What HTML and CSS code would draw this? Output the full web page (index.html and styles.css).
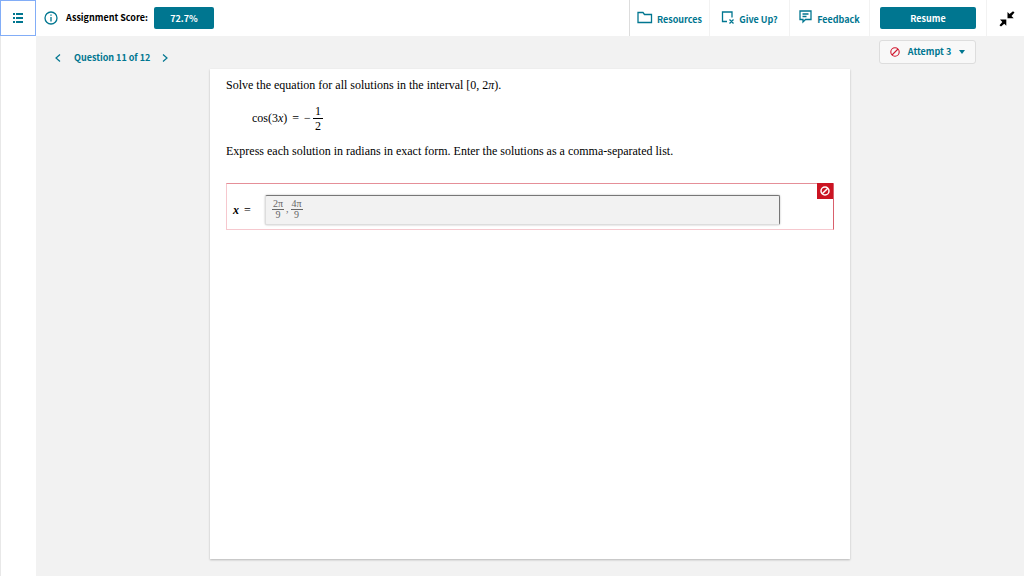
FILE: index.html
```html
<!DOCTYPE html>
<html lang="en">
<head>
    <meta charset="UTF-8">
    <title>Question 11 of 12</title>
    <link rel="stylesheet" href="styles.css">
</head>
<body>
<div class="app">
    <aside class="sidebar">
        <button class="menu" type="button" aria-label="Question list">
            <svg width="12" height="10" viewBox="0 0 12 10" fill="#007690">
                <path d="M1 0h2v2H1zM4 0h7v2H4zM1 4h2v2H1zM4 4h7v2H4zM1 8h2v2H1zM4 8h7v2H4z"/>
            </svg>
        </button>
    </aside>

    <div class="content">
        <header class="header">
            <button class="info" type="button" aria-label="Score information">
                <svg width="14" height="14" viewBox="0 0 14 14" fill="none" stroke="#007690">
                    <circle cx="7" cy="7" r="6" stroke-width="1.3"/>
                    <path d="M7 6v4.5M7 3.5v1.3" stroke-width="1.3"/>
                </svg>
            </button>
            <span class="score-label">Assignment Score:</span>
            <span class="score">72.7%</span>

            <nav class="tools">
                <a class="tool" href="#">
                    <svg width="16" height="14" viewBox="0 0 16 14" fill="none" stroke="#007690" stroke-width="1.3">
                        <path d="M1 11.500v-10h5l1.500 2h7v8z"/>
                    </svg>
                    <span>Resources</span>
                </a>
                <a class="tool" href="#">
                    <svg width="14" height="14" viewBox="0 0 14 14" fill="none" stroke="#007690" stroke-width="1.3">
                        <path d="M6 10.500H1.500V1h9.500v5.500M8.500 8.500l4 4M12.500 8.500l-4 4"/>
                    </svg>
                    <span>Give Up?</span>
                </a>
                <a class="tool" href="#">
                    <svg width="14" height="16" viewBox="0 0 14 16" fill="none" stroke="#007690" stroke-width="1.3">
                        <path d="M1 1h11v8.500H6.500L4 12V9.500H1zM3.500 4h6M3.500 6.500h4"/>
                    </svg>
                    <span>Feedback</span>
                </a>
            </nav>
            <div class="resume-box">
                <button class="resume" type="button">Resume</button>
            </div>
            <button class="collapse" type="button" aria-label="Exit full screen">
                <svg width="16" height="16" viewBox="0 0 16 16" fill="#000">
                    <path d="M8.500 7.300V1l2 2L14 0.300 15.500 1.500 12.500 5l2.200 2.300zM7.300 8.500v6.300l-2-2L2 15.500 0.500 14.300 3.300 11 1 8.500z"/>
                </svg>
            </button>
        </header>

        <div class="bar">
            <button class="arrow" type="button" aria-label="Previous question">
                <svg width="6" height="8" viewBox="0 0 6 8" fill="none" stroke="#007690" stroke-width="1.2"><path d="M5 0.500L1 4l4 3.500"/></svg>
            </button>
            <span class="position">Question 11 of 12</span>
            <button class="arrow" type="button" aria-label="Next question">
                <svg width="6" height="8" viewBox="0 0 6 8" fill="none" stroke="#007690" stroke-width="1.2"><path d="M1 0.500L5 4 1 7.500"/></svg>
            </button>
            <button class="attempt" type="button">
                <svg width="10" height="10" viewBox="0 0 10 10" fill="none" stroke="#d0142c" stroke-width="1.1"><circle cx="5" cy="5" r="4.200"/><path d="M2 8l6-6"/></svg>
                <span>Attempt 3</span>
                <svg width="6" height="4" viewBox="0 0 6 4" fill="#007690"><path d="M0 0h6L3 4z"/></svg>
            </button>
        </div>

        <main class="card">
            <p>Solve the equation for all solutions in the interval <span>[0, 2<i>π</i>)</span>.</p>
            <div class="equation">
                <span>cos(3<i>x</i>)</span>
                <span>=</span>
                <span class="signed">−<span class="frac"><span>1</span><span>2</span></span></span>
            </div>
            <p>Express each solution in radians in exact form. Enter the solutions as a comma-separated list.</p>

            <div class="answer">
                <label class="answer-label" for="answer"><i>x</i> <span>=</span></label>
                <div class="field">
                    <input id="answer" type="text" disabled>
                    <div class="value">
                        <span class="frac"><span>2π</span><span>9</span></span>
                        <span>,</span>
                        <span class="frac"><span>4π</span><span>9</span></span>
                    </div>
                </div>
                <span class="wrong">
                    <svg width="10" height="10" viewBox="0 0 10 10" fill="none" stroke="#fff" stroke-width="1.5"><circle cx="5" cy="5" r="4"/><path d="M2.200 7.800l5.600-5.600"/></svg>
                </span>
            </div>
        </main>
    </div>
</div>
</body>
</html>
```

FILE: styles.css
```css
* {
    box-sizing: border-box;
    margin: 0;
    padding: 0;
}

body {
    background: #f2f2f2;
    color: #007690;
    font: bold 9px/16px "Noto Sans CJK SC", "Open Sans", sans-serif;
}

button {
    border: 0;
    background: none;
    color: inherit;
    font: inherit;
    cursor: pointer;
}

svg {
    display: block;
    flex: none;
}

.app {
    display: flex;
    min-height: 100vh;
}

.sidebar {
    flex: none;
    width: 36px;
    background: #fff;
    border-left: 1px solid #e8e8e8;
}

.menu {
    display: flex;
    align-items: center;
    justify-content: center;
    width: 36px;
    height: 36px;
    margin-left: -1px;
    border: 1px solid #82adf7;
}

.content {
    flex: 1;
    display: flex;
    flex-direction: column;
}

/* top bar */
.header {
    display: flex;
    align-items: center;
    height: 36px;
    padding-left: 8px;
    background: #fff;
}

.score-label {
    margin-left: 8px;
    color: #000;
}

.score,
.resume {
    height: 22px;
    border-radius: 2px;
    background: #007690;
    color: #fff;
    line-height: 23px;
    text-align: center;
}

.score {
    width: 60px;
    margin-left: 6px;
}

.tools {
    display: flex;
    align-self: stretch;
    margin-left: auto;
    border-left: 1px solid #ddd;
}

.tool {
    display: flex;
    align-items: center;
    justify-content: center;
    gap: 4px;
    width: 80px;
    border-right: 1px solid #f2f2f2;
    color: #007690;
    text-decoration: none;
}

.tool span {
    padding-top: 3px;
}

.resume-box {
    display: flex;
    align-items: center;
    align-self: stretch;
    padding: 0 10px;
    border-right: 1px solid #f2f2f2;
}

.resume {
    width: 96px;
}

.collapse {
    padding: 2px 9px 0 12px;
}

/* question navigation */
.bar {
    display: flex;
    align-items: center;
    height: 33px;
    padding: 0 48px 0 19px;
}

.position {
    margin: 0 12px 0 13px;
}

.bar .arrow,
.position {
    padding-top: 11px;
}

.attempt {
    display: flex;
    align-items: center;
    justify-content: center;
    gap: 8px;
    width: 97px;
    height: 24px;
    margin-left: auto;
    margin-bottom: 1px;
    border: 1px solid #ddd;
    border-radius: 3px;
    background: #f8f8f8;
}

/* question */
.card {
    flex: 1;
    align-self: center;
    width: 100%;
    max-width: 640px;
    margin-bottom: 17px;
    padding: 8px 16px;
    background: #fff;
    box-shadow: 0 1px 2px rgba(0, 0, 0, 0.25);
    color: #000;
    font: 12px/16px "Liberation Serif", serif;
}

.frac {
    display: inline-flex;
    flex-direction: column;
    align-items: center;
    vertical-align: middle;
}

.frac span:first-child {
    border-bottom: 1px solid currentColor;
}

.equation {
    display: flex;
    align-items: center;
    gap: 5px;
    margin: 8px 26px;
    height: 34px;
}

.signed {
    display: flex;
    align-items: center;
    gap: 2px;
}

.equation .frac {
    line-height: 14px;
}

.equation .frac span {
    padding: 0 2px;
}

.answer {
    position: relative;
    display: flex;
    align-items: center;
    height: 47px;
    margin-top: 24px;
    padding: 6px 53px 0 6px;
    border: 1px solid #f6c8ce;
    border-top-color: #e58f98;
    border-right-color: #d9606c;
}

.answer-label {
    display: flex;
    gap: 5px;
    width: 32px;
}

.answer-label i {
    font-weight: bold;
}

.field {
    position: relative;
    flex: 1;
}

.field input {
    display: block;
    width: 100%;
    height: 30px;
    border: 1px solid #ddd;
    border-top-color: #777;
    border-right-color: #777;
    border-radius: 2px;
    background: #f2f2f2;
    box-shadow: 0 0 2px rgba(0, 0, 0, 0.3);
}

.value {
    position: absolute;
    top: 4px;
    left: 7px;
    display: flex;
    align-items: center;
    gap: 2px;
    color: #666;
    font-size: 10px;
    line-height: 10px;
}

.value .frac span {
    padding: 0 1px;
}

.wrong {
    position: absolute;
    top: -1px;
    right: 0;
    padding: 3px;
    background: #cb1422;
}
```
